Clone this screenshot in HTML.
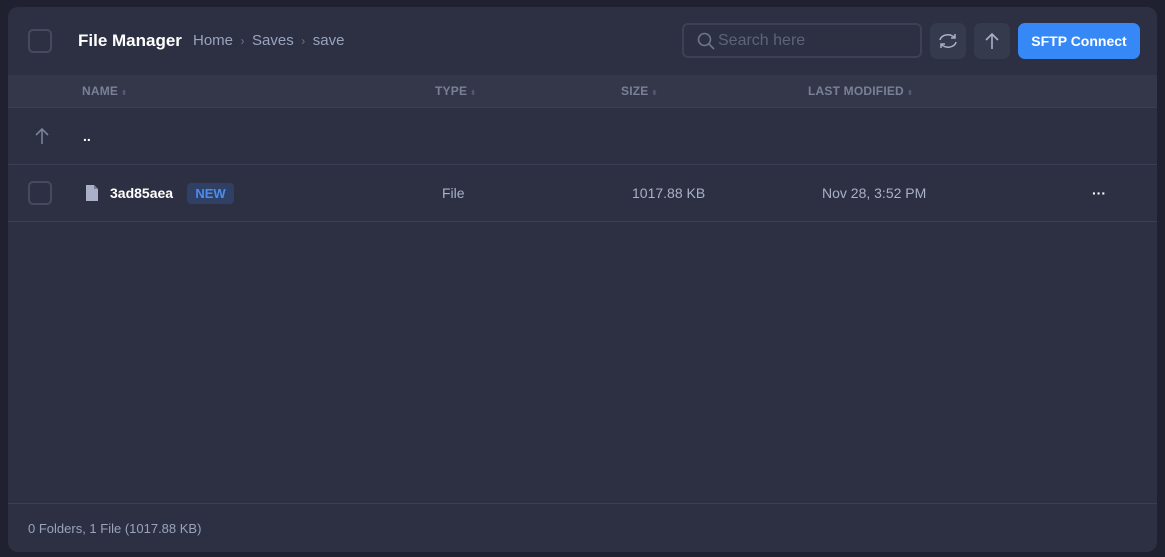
<!DOCTYPE html>
<html><head><style>
*{box-sizing:border-box;margin:0;padding:0}
body{width:1165px;height:557px;background:#1f2130;font-family:"Liberation Sans",sans-serif;position:relative;overflow:hidden}
.card{position:absolute;left:8px;top:7px;width:1149px;height:545px;background:#2c3042;border-radius:10px;overflow:hidden}
.abs{position:absolute}
.cb{position:absolute;width:24px;height:24px;border:2px solid #454a5e;border-radius:5px}
.th{position:absolute;top:77px;font-size:12px;font-weight:bold;color:#7b8099;letter-spacing:.2px}
.th span{font-size:7px;color:#555a70;margin-left:3px}
.line{position:absolute;left:0;width:100%;height:1px;background:#3b3f53}
.t{position:absolute;font-size:14px;color:#a9b0c8}
</style></head><body>
<div class="card">
 <div class="cb" style="left:20px;top:22px"></div>
 <div class="abs" style="left:70px;top:24px;font-size:17px;font-weight:bold;color:#fff">File Manager</div>
 <div class="abs" style="left:185px;top:25px;font-size:15px;color:#9aa3bd">Home <span style="color:#6c7288;font-size:12px">&nbsp;›&nbsp;</span> Saves <span style="color:#6c7288;font-size:12px">&nbsp;›&nbsp;</span> save</div>
 <div class="abs" style="left:674px;top:16px;width:240px;height:35px;border:2px solid #3d4155;border-radius:6px"></div>
 <svg class="abs" style="left:689px;top:25px" width="18" height="18" viewBox="0 0 18 18" fill="none" stroke="#6e748a" stroke-width="1.6"><circle cx="7.5" cy="7.5" r="6"/><path d="M12 12l5 5"/></svg>
 <div class="abs" style="left:710px;top:25px;font-size:16px;color:#5e6479">Search here</div>
 <div class="abs" style="left:922px;top:16px;width:36px;height:36px;background:#353a4d;border-radius:7px"></div>
 <svg class="abs" style="left:929px;top:23px" width="22" height="22" viewBox="0 0 22 22" fill="none" stroke="#a9b0c8" stroke-width="1.5"><path d="M3 10a8 6 0 0 1 15-2M19 12a8 6 0 0 1-15 2"/><path d="M18 4v4h-4M4 18v-4h4"/></svg>
 <div class="abs" style="left:966px;top:16px;width:36px;height:36px;background:#353a4d;border-radius:7px"></div>
 <svg class="abs" style="left:974px;top:24px" width="20" height="20" viewBox="0 0 20 20" fill="none" stroke="#a9b0c8" stroke-width="1.6"><path d="M10 18V3M4 9l6-6 6 6"/></svg>
 <div class="abs" style="left:1010px;top:16px;width:122px;height:36px;background:#3788f7;border-radius:7px;color:#fff;font-size:14px;font-weight:bold;text-align:center;line-height:36px">SFTP Connect</div>

 <div class="abs" style="left:0;top:68px;width:100%;height:32px;background:#333749"></div>
 <div class="th" style="left:74px">NAME<span>⬍</span></div>
 <div class="th" style="left:427px">TYPE<span>⬍</span></div>
 <div class="th" style="left:613px">SIZE<span>⬍</span></div>
 <div class="th" style="left:800px">LAST MODIFIED<span>⬍</span></div>
 <div class="line" style="top:100px"></div>
 <svg class="abs" style="left:24px;top:119px" width="20" height="20" viewBox="0 0 20 20" fill="none" stroke="#7b8099" stroke-width="1.6"><path d="M10 18V3M4 9l6-6 6 6"/></svg>
 <div class="abs" style="left:75px;top:121px;font-size:14px;color:#fff;font-weight:bold">..</div>
 <div class="line" style="top:157px"></div>
 <div class="cb" style="left:20px;top:174px"></div>
 <svg class="abs" style="left:77px;top:177px" width="14" height="18" viewBox="0 0 14 18"><path d="M1 1h8l4 4v12H1z" fill="#a9b0c8"/><path d="M9 1v4h4" fill="#7b8099"/></svg>
 <div class="abs" style="left:102px;top:178px;font-size:14px;font-weight:bold;color:#fff">3ad85aea</div>
 <div class="abs" style="left:179px;top:176px;width:47px;height:21px;background:#2f4064;border-radius:4px;color:#4a8cf0;font-size:13px;font-weight:bold;text-align:center;line-height:21px">NEW</div>
 <div class="t" style="left:434px;top:178px">File</div>
 <div class="t" style="left:624px;top:178px">1017.88 KB</div>
 <div class="t" style="left:814px;top:178px">Nov 28, 3:52 PM</div>
 <div class="abs" style="left:1084px;top:178px;font-size:14px;color:#fff;font-weight:bold">···</div>
 <div class="line" style="top:214px"></div>
 <div class="line" style="top:496px"></div>
 <div class="abs" style="left:20px;top:514px;font-size:13px;color:#9aa3bd">0 Folders, 1 File (1017.88 KB)</div>
</div>
</body></html>
